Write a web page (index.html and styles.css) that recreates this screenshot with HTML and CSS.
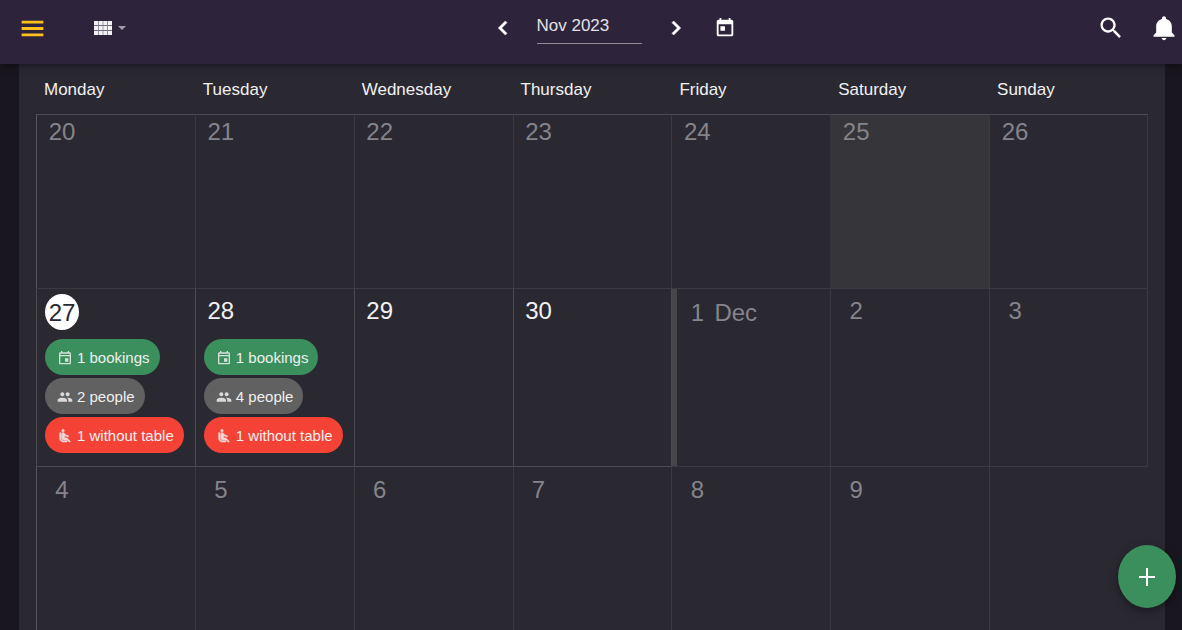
FILE: index.html
```html
<!DOCTYPE html>
<html lang="en">
<head>
<meta charset="utf-8">
<meta name="viewport" content="width=device-width, initial-scale=1">
<title>Bookings calendar</title>
<link rel="stylesheet" href="styles.css">
</head>
<body>
<svg class="sprite" aria-hidden="true">
  <symbol id="event" viewBox="0 0 24 24"><path d="M19 3.500h-1V1.500h-2v2H8v-2H6v2H5c-1.100 0-2 .9-2 2v14c0 1.100.9 2 2 2h14c1.100 0 2-.9 2-2v-14c0-1.100-.9-2-2-2zm0 16H5v-10h14v10zm0-12H5v-2h14v2zM12 12.500h5v5h-5z"/></symbol>
  <symbol id="people" viewBox="0 0 24 24"><path d="M16 11c1.660 0 2.990-1.340 2.990-3S17.660 5 16 5s-3 1.340-3 3 1.340 3 3 3zm-8 0c1.660 0 2.990-1.340 2.990-3S9.660 5 8 5 5 6.340 5 8s1.340 3 3 3zm0 2c-2.330 0-7 1.170-7 3.500V19h14v-2.500c0-2.330-4.670-3.500-7-3.500zm8 0c-.29 0-.62.02-.97.05 1.160.84 1.970 1.970 1.970 3.450V19h6v-2.500c0-2.330-4.670-3.500-7-3.500z"/></symbol>
  <symbol id="seat" viewBox="0 0 24 24"><path stroke="currentColor" stroke-width=".8" d="M7.590 5.410c-.78-.78-.78-2.050 0-2.830s2.050-.78 2.830 0 .78 2.050 0 2.830c-.79.79-2.050.79-2.830 0zM6 16V7H4v9c0 2.760 2.240 5 5 5h6v-2H9c-1.660 0-3-1.340-3-3zm14 4.070L14.930 15H11.500v-3.680c1.400 1.150 3.600 2.160 5.500 2.160v-2.160c-1.660.02-3.610-.87-4.670-2.040l-1.400-1.550c-.19-.21-.43-.38-.69-.5-.29-.14-.62-.23-.96-.23h-.03C8.010 7 7 8.010 7 9.250V15c0 1.660 1.340 3 3 3h5.070l3.500 3.500L20 20.070z"/></symbol>
</svg>
<div class="app">
  <header class="topbar">
    <div class="topbar-start">
      <button class="icon-button" aria-label="Menu"><svg class="icon-menu" viewBox="0 0 24 24" preserveAspectRatio="none"><path d="M3 18h18v-2.200H3v2.200zm0-4.900h18v-2.200H3v2.200zm0-7.100v2.200h18V6H3z"/></svg></button>
      <button class="icon-button view-button" aria-label="Change view">
        <svg class="icon-view" viewBox="0 0 18 14"><path opacity=".35" d="M0 0h18v14H0z"/><path d="M0 0h4v4H0zM4.700 0h4v4h-4zM9.300 0h4v4h-4zM14 0h4v4h-4zM0 5h4v4H0zM4.700 5h4v4h-4zM9.300 5h4v4h-4zM14 5h4v4h-4zM0 10h4v4H0zM4.700 10h4v4h-4zM9.300 10h4v4h-4zM14 10h4v4h-4z"/></svg>
        <svg class="icon-caret" viewBox="0 0 8 4"><path d="M0 0h8L4 4z"/></svg>
      </button>
    </div>
    <div class="month-nav">
      <button class="icon-button" aria-label="Previous month"><svg class="icon-large" viewBox="0 0 24 24"><path stroke="currentColor" stroke-width=".5" d="M15.410 7.410 14 6l-6 6 6 6 1.410-1.410L10.830 12z"/></svg></button>
      <input class="month-input" type="text" aria-label="Month" value="Nov 2023">
      <button class="icon-button" aria-label="Next month"><svg class="icon-large" viewBox="0 0 24 24"><path stroke="currentColor" stroke-width=".5" d="M10 6 8.590 7.410 13.170 12l-4.580 4.590L10 18l6-6z"/></svg></button>
      <button class="icon-button today-button" aria-label="Today"><svg class="icon-medium" viewBox="0 0 24 24"><path d="M19 3h-1V1h-2v2H8V1H6v2H5c-1.110 0-2 .9-2 2v14c0 1.100.89 2 2 2h14c1.100 0 2-.9 2-2V5c0-1.100-.9-2-2-2zm0 16H5V8h14v11zM7 10h5v5H7z"/></svg></button>
    </div>
    <div class="topbar-end">
      <button class="icon-button" aria-label="Search"><svg class="icon-large" viewBox="0 0 24 24"><path d="M15.500 14h-.79l-.28-.27C15.410 12.590 16 11.110 16 9.500 16 5.910 13.090 3 9.500 3S3 5.910 3 9.500 5.910 16 9.500 16c1.610 0 3.090-.59 4.230-1.570l.27.28v.79l5 4.990L20.490 19l-4.990-5zm-6 0C7.010 14 5 11.990 5 9.500S7.010 5 9.500 5 14 7.010 14 9.500 11.990 14 9.500 14z"/></svg></button>
      <button class="icon-button" aria-label="Notifications"><svg class="icon-large" viewBox="0 0 24 24"><path d="M9.900 20.600c.2 1.100 1.100 1.800 2.100 1.800s1.900-.7 2.100-1.800zM21 19.500v-1.200l-2.300-2.400V10.500c0-3.100-1.900-5.500-5-6.300V3.600C13.700 2.700 12.900 2 12 2s-1.700.7-1.700 1.600v.6c-3.100.8-5 3.200-5 6.300v5.400L3 18.300v1.200z"/></svg></button>
    </div>
  </header>
  <main class="sheet">
    <table class="calendar">
      <thead>
        <tr><th scope="col">Monday</th><th scope="col">Tuesday</th><th scope="col">Wednesday</th><th scope="col">Thursday</th><th scope="col">Friday</th><th scope="col">Saturday</th><th scope="col">Sunday</th></tr>
      </thead>
      <tbody>
        <tr class="week week-first">
          <td><span class="day">20</span></td>
          <td><span class="day">21</span></td>
          <td><span class="day">22</span></td>
          <td><span class="day">23</span></td>
          <td><span class="day">24</span></td>
          <td class="marked"><span class="day">25</span></td>
          <td><span class="day">26</span></td>
        </tr>
        <tr class="week week-current">
          <td class="active">
            <span class="day today">27</span>
            <ul class="chips">
              <li class="chip chip-bookings"><svg><use href="#event"/></svg>1 bookings</li>
              <li class="chip chip-people"><svg><use href="#people"/></svg>2 people</li>
              <li class="chip chip-alert"><svg><use href="#seat"/></svg>1 without table</li>
            </ul>
          </td>
          <td class="active">
            <span class="day">28</span>
            <ul class="chips">
              <li class="chip chip-bookings"><svg><use href="#event"/></svg>1 bookings</li>
              <li class="chip chip-people"><svg><use href="#people"/></svg>4 people</li>
              <li class="chip chip-alert"><svg><use href="#seat"/></svg>1 without table</li>
            </ul>
          </td>
          <td class="active"><span class="day">29</span></td>
          <td class="active"><span class="day">30</span></td>
          <td class="month-start"><span class="day">1</span><span class="month-name">Dec</span></td>
          <td><span class="day">2</span></td>
          <td><span class="day">3</span></td>
        </tr>
        <tr class="week week-last">
          <td class="below-active"><span class="day">4</span></td>
          <td class="below-active"><span class="day">5</span></td>
          <td class="below-active"><span class="day">6</span></td>
          <td class="below-active"><span class="day">7</span></td>
          <td><span class="day">8</span></td>
          <td><span class="day">9</span></td>
          <td></td>
        </tr>
      </tbody>
    </table>
  </main>
  <button class="fab" aria-label="Add booking"><svg viewBox="0 0 16 18"><path d="M7 0h2v8h7v2H9v8H7v-8H0V8h7z"/></svg></button>
</div>
</body>
</html>
```

FILE: styles.css
```css
:root {
  --bar: #2d243b;
  --page: #19161f;
  --sheet: #2a2831;
  --line: #3b3a42;
  --line-strong: #4c4b50;
  --line-edge: #57565a;
  --muted: #85848a;
  --text: #f1f1f1;
  --green: #3a8f5c;
}

* { box-sizing: border-box; }

body {
  margin: 0;
  background: var(--page);
  color: var(--text);
  font-family: "Liberation Sans", Arial, sans-serif;
  font-size: 17px;
}

.sprite { display: none; }

.app {
  display: flex;
  flex-direction: column;
  height: 100vh;
  overflow: hidden;
}

button {
  border: 0;
  padding: 0;
  background: none;
  color: inherit;
  font: inherit;
  cursor: pointer;
}

svg { display: block; fill: currentColor; }

/* Top bar */
.topbar {
  position: relative;
  z-index: 1;
  display: grid;
  grid-template-columns: 1fr auto 1fr;
  align-items: center;
  flex: none;
  height: 64px;
  padding: 0 4px 8px 18px;
  background: var(--bar);
  box-shadow: 0 1px 8px rgba(0, 0, 0, .5);
}

.topbar-start, .topbar-end, .month-nav { display: flex; align-items: center; }
.topbar-start { gap: 47px; }
.topbar-end { justify-content: flex-end; gap: 25px; }
.month-nav { margin-left: 28px; }

.icon-button { display: flex; align-items: center; color: #fff; }
.icon-menu { width: 29px; height: 31px; fill: #fbc01c; }
.icon-view { width: 18px; height: 14px; }
.icon-medium { width: 22px; height: 22px; }
.icon-large { width: 28px; height: 28px; }
.view-button { gap: 6px; color: #f1f0f3; }
.icon-caret { width: 8px; height: 4px; fill: #a09ca8; }
.today-button { margin-left: 24px; }

.month-input {
  width: 105px;
  height: 32px;
  margin: 0 20px;
  padding: 0 0 4px;
  border: 0;
  border-bottom: 1px solid #918b98;
  outline: 0;
  background: none;
  color: #e3e1e5;
  font: inherit;
}

/* Calendar */
.sheet {
  flex: 1;
  margin: 0 17px 0 19px;
  padding: 0 17px;
  background: var(--sheet);
}

.calendar {
  width: 100%;
  table-layout: fixed;
  border-spacing: 0;
}

.calendar th {
  height: 50px;
  padding: 2px 8px 0;
  text-align: left;
  font-weight: normal;
}

.calendar td {
  padding: 4px 8px 0;
  border-top: 1px solid var(--line);
  border-left: 1px solid var(--line);
  vertical-align: top;
  color: var(--muted);
  font-size: 24px;
  line-height: 26px;
}

.calendar td:first-child { border-left-color: var(--line-edge); }
.calendar td:last-child { border-right: 1px solid var(--line); }
.week-first { height: 174px; }
.calendar .week-first td { border-top-color: var(--line-strong); }
.week-current { height: 178px; }
.calendar .week-current td { padding-top: 9px; }
.week-last { height: 180px; }
.calendar .week-last td { padding-top: 10px; }
.calendar .week-last td:last-child { border-right: 0; }

.calendar td.marked { background: #363539; border-left-color: #363539; }
.calendar td.active { color: var(--text); border-left-color: var(--line-strong); }
.calendar .week-last td.below-active { border-top-color: var(--line-strong); }
.calendar td.month-start { box-shadow: inset 5px 0 #464548; border-left-color: #4c4b4e; }
.calendar .week-current td.month-start { padding-top: 11px; }

.day {
  display: block;
  width: 34px;
  text-align: center;
}

.month-start .day { display: inline-block; }
.calendar .week-current td:has(.today) { padding-top: 5px; }

.day.today {
  height: 36px;
  border-radius: 50%;
  background: #fff;
  color: #2a2831;
  line-height: 37px;
}

.chips {
  display: flex;
  flex-direction: column;
  align-items: flex-start;
  gap: 3px;
  margin: 15px 0 0;
  padding: 0;
  list-style: none;
}

.today + .chips { margin-top: 9px; }

.chip {
  display: flex;
  align-items: center;
  gap: 4px;
  height: 36px;
  padding: 2px 10px 0 12px;
  border-radius: 18px;
  color: #f0f0f0;
  font-size: 15px;
  line-height: 20px;
  white-space: nowrap;
}

.chip svg { width: 16px; height: 16px; opacity: .85; }
.chip-bookings { background: var(--green); }
.chip-people { background: #616161; }
.chip-alert { background: #f44336; }

.fab {
  position: fixed;
  right: 6px;
  bottom: 22px;
  z-index: 2;
  display: grid;
  place-items: center;
  width: 58px;
  height: 63px;
  border-radius: 50%;
  background: var(--green);
  color: #fff;
  box-shadow: 0 3px 10px rgba(0, 0, 0, .4);
}

.fab svg { width: 16px; height: 18px; }
```
